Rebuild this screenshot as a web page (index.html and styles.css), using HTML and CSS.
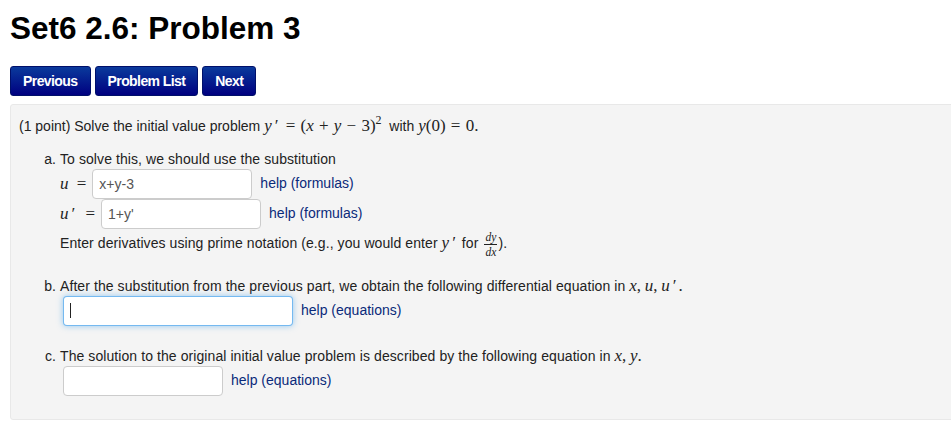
FILE: index.html
```html
<!DOCTYPE html>
<html lang="en">
<head>
  <meta charset="UTF-8" />
  <title>Set6 2.6: Problem 3</title>
  <link rel="stylesheet" href="styles.css">
</head>
<body>
  <h1>Set6 2.6: Problem 3</h1>

  <div class="nav">
    <a class="btn" href="#">Previous</a>
    <a class="btn" href="#">Problem List</a>
    <a class="btn" href="#">Next</a>
  </div>

  <div class="problem">
    <p class="intro">(1 point) Solve the initial value problem <span class="math"><i>y</i><span class="prime">&#8242;</span> = (<i>x</i> + <i>y</i> &minus; 3)<sup>2</sup></span> &nbsp;with <span class="math"><i>y</i>(0) = 0.</span></p>

    <ol class="parts">
      <li>
        <div>To solve this, we should use the substitution</div>
        <div class="row">
          <span class="math label"><i>u</i> =</span>
          <input class="answer" type="text" value="x+y-3">
          <a class="help" href="#">help (formulas)</a>
        </div>
        <div class="row">
          <span class="math label"><i>u</i><span class="prime">&#8242;</span> =</span>
          <input class="answer" type="text" value="1+y'">
          <a class="help" href="#">help (formulas)</a>
        </div>
        <div class="note">Enter derivatives using prime notation (e.g., you would enter <span class="math"><i>y</i><span class="prime">&#8242;</span></span> for
          <span class="frac"><i class="top">dy</i><i class="bottom">dx</i></span>).</div>
      </li>
      <li>
        <div>After the substitution from the previous part, we obtain the following differential equation in <span class="math vars"><i>x</i>, <i>u</i>, <i>u</i><span class="prime">&#8242;</span>.</span></div>
        <div class="row indent">
          <span class="field">
            <input class="answer wide focused" type="text">
            <span class="caret"></span>
          </span>
          <a class="help" href="#">help (equations)</a>
        </div>
      </li>
      <li>
        <div>The solution to the original initial value problem is described by the following equation in <span class="math vars"><i>x</i>, <i>y</i>.</span></div>
        <div class="row indent">
          <input class="answer" type="text">
          <a class="help" href="#">help (equations)</a>
        </div>
      </li>
    </ol>
  </div>
</body>
</html>
```

FILE: styles.css
```css
body {
  margin: 0;
  padding: 0 0 12px 10px;
  overflow-x: hidden;
  font-family: "Liberation Sans", Arial, sans-serif;
  font-size: 14px;
  line-height: 20px;
  color: #222;
  background: #fff;
}
h1 {
  margin: 0;
  padding-top: 8px;
  height: 66px;
  box-sizing: border-box;
  font-size: 31.5px;
  line-height: 40px;
  font-weight: bold;
  color: #000;
}
.nav {
  display: flex;
  gap: 4px;
}
.btn {
  display: block;
  height: 30px;
  box-sizing: border-box;
  padding: 0 12px;
  line-height: 28px;
  font-weight: bold;
  font-size: 14px;
  letter-spacing: -0.58px;
  color: #fff;
  text-decoration: none;
  background: linear-gradient(#0a3a9c, #000080);
  border: 1px solid #00106a;
  border-radius: 3px;
}
.problem {
  margin: 8px -20px 0 0;
  height: 316px;
  box-sizing: border-box;
  padding: 11px 0 0 8px;
  background: #f4f4f4;
  border: 1px solid #e8e8e8;
  border-radius: 3px;
}
.intro {
  margin: 0 0 13px;
}
.math {
  font-family: "Liberation Serif", "Times New Roman", serif;
  font-size: 17px;
  letter-spacing: 0;
  word-spacing: 1px;
}
.vars {
  word-spacing: -0.6px;
}
.prime {
  font-style: italic;
  margin: 0 3px 0 2px;
}
sup {
  font-size: 12px;
  line-height: 0;
}
.parts {
  margin: 0;
  padding-left: 41px;
  list-style: lower-alpha;
  letter-spacing: 0.08px;
}
.parts li {
  margin-bottom: 20px;
}
.row {
  display: flex;
  align-items: center;
  height: 30px;
  letter-spacing: 0;
}
.indent {
  padding-left: 3px;
}
.label {
  margin-right: 6px;
  word-spacing: 4px;
  white-space: nowrap;
}
.field {
  position: relative;
  display: block;
  height: 30px;
}
.caret {
  position: absolute;
  left: 7px;
  top: 7px;
  width: 1px;
  height: 15px;
  background: #222;
}
.answer {
  width: 160px;
  height: 30px;
  box-sizing: border-box;
  padding: 4px 6px;
  font-family: "Liberation Sans", Arial, sans-serif;
  font-size: 14px;
  color: #555;
  background: #fff;
  border: 1px solid #ccc;
  border-radius: 4px;
}
.wide {
  width: 230px;
}
.focused {
  border-color: rgba(82, 168, 236, 0.8);
  box-shadow: 0 0 6px rgba(82, 168, 236, 0.6);
}
.help {
  margin-left: 8px;
  padding-bottom: 2px;
  color: #0a2a7a;
  text-decoration: none;
}
.note {
  height: 27px;
  line-height: 28px;
}
.frac {
  display: inline-flex;
  flex-direction: column;
  margin: 0 1px 0 2px;
  vertical-align: middle;
  text-align: center;
  font-family: "Liberation Serif", "Times New Roman", serif;
  font-size: 11.5px;
  line-height: 12px;
}
.top {
  border-bottom: 1px solid #222;
  padding: 0 1px 1px;
}
.bottom {
  padding-top: 1px;
}
```
